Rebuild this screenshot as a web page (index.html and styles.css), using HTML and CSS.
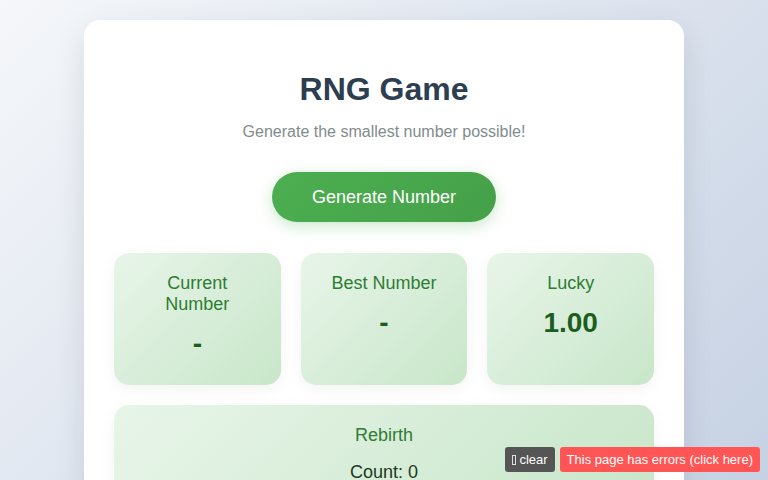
FILE: index.html
```html
<!DOCTYPE html>
<html lang="en">
<head>
    <meta charset="UTF-8">
    <meta name="viewport" content="width=device-width, initial-scale=1.0">
    <title>RNG Game</title>
    <link rel="stylesheet" href="styles.css">
</head>
<body>
    <div class="container">
        <h1>RNG Game</h1>
        <p class="subtitle">Generate the smallest number possible!</p>
        <button id="generate-btn" class="generate-btn">Generate Number</button>

        <div class="stats">
            <div class="stat-card">
                <div class="stat-label">Current Number</div>
                <div class="stat-value" id="current">-</div>
            </div>
            <div class="stat-card">
                <div class="stat-label">Best Number</div>
                <div class="stat-value" id="best">-</div>
            </div>
            <div class="stat-card">
                <div class="stat-label">Lucky</div>
                <div class="stat-value" id="lucky">1.00</div>
            </div>
        </div>

        <div class="rebirth">
            <div class="rebirth-title">Rebirth</div>
            <div class="rebirth-count">Count: <span id="rebirths">0</span></div>
        </div>
    </div>

    <div class="error-bar">
        <button class="clear-btn"><span class="tofu"></span> clear</button>
        <button class="error-btn">This page has errors (click here)</button>
    </div>
</body>
</html>
```

FILE: styles.css
```css
* {
    box-sizing: border-box;
}

body {
    margin: 0;
    padding: 20px;
    min-height: 100vh;
    font-family: "Liberation Sans", Arial, sans-serif;
    background: linear-gradient(135deg, #f5f7fa 0%, #c3cfe2 100%);
}

.container {
    max-width: 600px;
    margin: 0 auto;
    padding: 30px;
    background-color: #fff;
    border-radius: 16px;
    box-shadow: 0 10px 30px rgba(0, 0, 0, 0.1);
    text-align: center;
}

h1 {
    font-size: 32px;
    line-height: 37px;
    margin: 21px 0 15px;
    color: #2c3e50;
}

.subtitle {
    font-size: 16px;
    line-height: 18px;
    margin: 0 0 31px;
    color: #7f8c8d;
}

.generate-btn {
    font-family: inherit;
    font-size: 18px;
    padding: 0 40px;
    height: 50px;
    border: none;
    border-radius: 25px;
    color: #fff;
    background: linear-gradient(135deg, #4caf50, #45a049);
    box-shadow: 0 4px 15px rgba(76, 175, 80, 0.3);
    cursor: pointer;
}

.stats {
    display: grid;
    grid-template-columns: repeat(3, 1fr);
    gap: 20px;
    margin-top: 31px;
}

.stat-card {
    padding: 20px 22px;
    height: 132px;
    border-radius: 15px;
    background: linear-gradient(135deg, #e8f5e9, #c8e6c9);
    box-shadow: 0 4px 15px rgba(0, 0, 0, 0.05);
}

.stat-label {
    font-size: 18px;
    line-height: 21px;
    color: #2e7d32;
}

.stat-value {
    font-size: 28px;
    line-height: 32px;
    font-weight: bold;
    margin-top: 13px;
    color: #1b5e20;
}

.rebirth {
    margin-top: 20px;
    padding: 20px;
    border-radius: 15px;
    background: linear-gradient(135deg, #e8f5e9, #c8e6c9);
    box-shadow: 0 4px 15px rgba(0, 0, 0, 0.05);
}

.rebirth-title {
    font-size: 18px;
    line-height: 21px;
    color: #2e7d32;
}

.rebirth-count {
    font-size: 18px;
    line-height: 21px;
    margin-top: 16px;
    color: #1b3a1e;
}

.error-bar {
    position: fixed;
    right: 8px;
    bottom: 8px;
    display: flex;
    gap: 5px;
}

.error-bar button {
    font-family: inherit;
    font-size: 13px;
    height: 25px;
    padding: 0 7px;
    border: none;
    border-radius: 3px;
    color: #fff;
}

.clear-btn {
    background-color: #555;
}

.tofu {
    display: inline-block;
    width: 4px;
    height: 10px;
    border: 1px solid #ddd;
    vertical-align: -1px;
}

.error-btn {
    background-color: #ff5555;
}
```
